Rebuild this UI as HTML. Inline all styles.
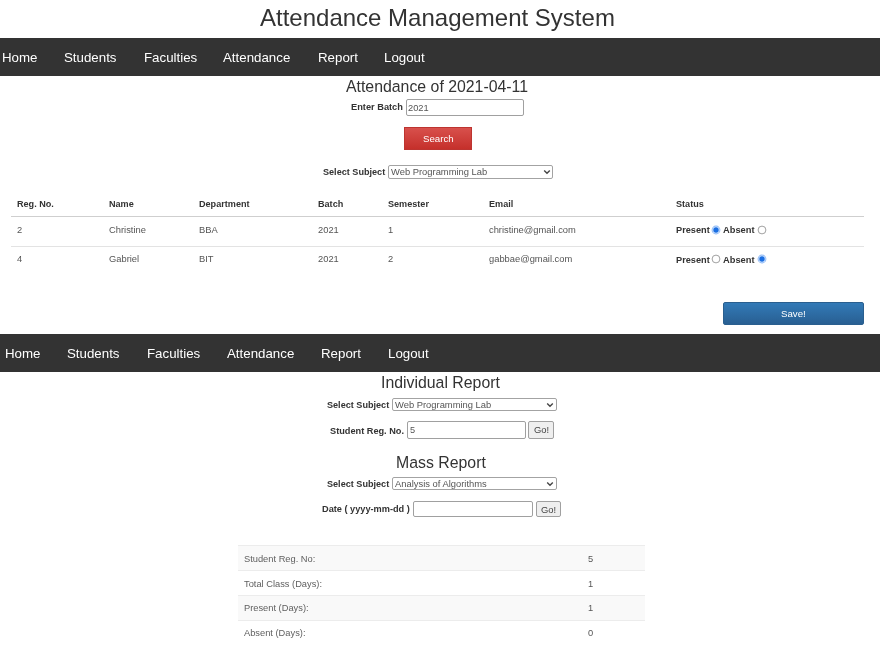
<!DOCTYPE html>
<html><head><meta charset="utf-8"><style>
html,body{margin:0;padding:0;background:#fff;width:880px;height:660px;overflow:hidden;position:relative;}
.t{position:absolute;white-space:nowrap;will-change:transform;font-family:"Liberation Sans",sans-serif;}
.b{position:absolute;}
</style></head><body>
<div class="t" style="left:260.20px;top:6.04px;font-size:24px;line-height:24px;font-weight:normal;color:#333;">Attendance Management System</div>
<div class="b" style="left:0px;top:38px;width:880.00px;height:38.00px;background:#333;"></div>
<div class="t" style="left:2.00px;top:50.63px;font-size:13.3px;line-height:13.3px;font-weight:normal;color:#fff;">Home</div>
<div class="t" style="left:63.60px;top:50.63px;font-size:13.3px;line-height:13.3px;font-weight:normal;color:#fff;">Students</div>
<div class="t" style="left:143.60px;top:50.63px;font-size:13.3px;line-height:13.3px;font-weight:normal;color:#fff;">Faculties</div>
<div class="t" style="left:223.10px;top:50.63px;font-size:13.3px;line-height:13.3px;font-weight:normal;color:#fff;">Attendance</div>
<div class="t" style="left:317.60px;top:50.63px;font-size:13.3px;line-height:13.3px;font-weight:normal;color:#fff;">Report</div>
<div class="t" style="left:384.00px;top:50.63px;font-size:13.3px;line-height:13.3px;font-weight:normal;color:#fff;">Logout</div>
<div class="t" style="left:346.40px;top:78.89px;font-size:15.85px;line-height:15.85px;font-weight:normal;color:#333;">Attendance of 2021-04-11</div>
<div class="t" style="left:351.30px;top:103.43px;font-size:9.25px;line-height:9.25px;font-weight:bold;color:#333;">Enter Batch</div>
<div class="b" style="left:405.9px;top:98.8px;width:118.60px;height:17.00px;border:1px solid #a0a0a0;border-radius:2px;background:#fff;box-sizing:border-box;"></div>
<div class="t" style="left:408.40px;top:103.89px;font-size:9.3px;line-height:9.3px;font-weight:normal;color:#555;">2021</div>
<div class="b" style="left:403.8px;top:127px;width:68.00px;height:23.00px;background:linear-gradient(#d8504c,#c5302b);border:1px solid #bd3430;box-sizing:border-box;"></div>
<div class="t" style="left:422.60px;top:133.75px;font-size:9.7px;line-height:9.7px;font-weight:normal;color:#fff;">Search</div>
<div class="t" style="left:323.30px;top:168.46px;font-size:9.1px;line-height:9.1px;font-weight:bold;color:#333;">Select Subject</div>
<div class="b" style="left:388.3px;top:165px;width:164.90px;height:13.60px;border:1px solid #a3a3a3;border-radius:2px;background:#fff;box-sizing:border-box;"></div>
<div class="t" style="left:391.20px;top:167.40px;font-size:9.4px;line-height:9.4px;font-weight:normal;color:#555;">Web Programming Lab</div>
<svg class="b" style="left:542.9000000000001px;top:169.0px" width="8" height="6" viewBox="0 0 8 6"><path d="M1.2 1.5 L4 4.2 L6.8 1.5" fill="none" stroke="#444" stroke-width="1.4"/></svg>
<div class="t" style="left:17.00px;top:199.66px;font-size:9.1px;line-height:9.1px;font-weight:bold;color:#333;">Reg. No.</div>
<div class="t" style="left:108.60px;top:199.66px;font-size:9.1px;line-height:9.1px;font-weight:bold;color:#333;">Name</div>
<div class="t" style="left:199.20px;top:199.66px;font-size:9.1px;line-height:9.1px;font-weight:bold;color:#333;">Department</div>
<div class="t" style="left:318.20px;top:199.66px;font-size:9.1px;line-height:9.1px;font-weight:bold;color:#333;">Batch</div>
<div class="t" style="left:388.10px;top:199.66px;font-size:9.1px;line-height:9.1px;font-weight:bold;color:#333;">Semester</div>
<div class="t" style="left:489.20px;top:199.66px;font-size:9.1px;line-height:9.1px;font-weight:bold;color:#333;">Email</div>
<div class="t" style="left:676.00px;top:199.66px;font-size:9.1px;line-height:9.1px;font-weight:bold;color:#333;">Status</div>
<div class="b" style="left:11px;top:216px;width:853.20px;height:1.00px;background:#cfcfcf;"></div>
<div class="b" style="left:11px;top:245.6px;width:853.20px;height:1.00px;background:#e3e3e3;"></div>
<div class="t" style="left:17.00px;top:225.75px;font-size:9.35px;line-height:9.35px;font-weight:normal;color:#555;">2</div>
<div class="t" style="left:108.60px;top:225.75px;font-size:9.35px;line-height:9.35px;font-weight:normal;color:#555;">Christine</div>
<div class="t" style="left:199.20px;top:225.75px;font-size:9.35px;line-height:9.35px;font-weight:normal;color:#555;">BBA</div>
<div class="t" style="left:318.20px;top:225.75px;font-size:9.35px;line-height:9.35px;font-weight:normal;color:#555;">2021</div>
<div class="t" style="left:388.10px;top:225.75px;font-size:9.35px;line-height:9.35px;font-weight:normal;color:#555;">1</div>
<div class="t" style="left:489.20px;top:225.75px;font-size:9.35px;line-height:9.35px;font-weight:normal;color:#555;">christine@gmail.com</div>
<div class="t" style="left:17.00px;top:255.15px;font-size:9.35px;line-height:9.35px;font-weight:normal;color:#555;">4</div>
<div class="t" style="left:108.60px;top:255.15px;font-size:9.35px;line-height:9.35px;font-weight:normal;color:#555;">Gabriel</div>
<div class="t" style="left:199.20px;top:255.15px;font-size:9.35px;line-height:9.35px;font-weight:normal;color:#555;">BIT</div>
<div class="t" style="left:318.20px;top:255.15px;font-size:9.35px;line-height:9.35px;font-weight:normal;color:#555;">2021</div>
<div class="t" style="left:388.10px;top:255.15px;font-size:9.35px;line-height:9.35px;font-weight:normal;color:#555;">2</div>
<div class="t" style="left:489.20px;top:255.15px;font-size:9.35px;line-height:9.35px;font-weight:normal;color:#555;">gabbae@gmail.com</div>
<div class="t" style="left:675.70px;top:226.37px;font-size:9.2px;line-height:9.2px;font-weight:bold;color:#333;">Present</div>
<svg class="b" style="left:711px;top:224.5px" width="10" height="10" viewBox="0 0 10 10"><circle cx="5" cy="5" r="4.4" fill="#8cb8f6"/><circle cx="5" cy="5" r="3.5" fill="#d9e8fd"/><circle cx="5" cy="5" r="2.7" fill="#1b6fe3"/></svg>
<div class="t" style="left:723.30px;top:226.29px;font-size:9.3px;line-height:9.3px;font-weight:bold;color:#333;">Absent</div>
<svg class="b" style="left:756.6px;top:224.6px" width="10" height="10" viewBox="0 0 10 10"><circle cx="5" cy="5" r="3.9" fill="#fff" stroke="#8a8a8a" stroke-width="0.8"/></svg>
<div class="t" style="left:675.70px;top:255.67px;font-size:9.2px;line-height:9.2px;font-weight:bold;color:#333;">Present</div>
<svg class="b" style="left:711px;top:254.10000000000002px" width="10" height="10" viewBox="0 0 10 10"><circle cx="5" cy="5" r="3.9" fill="#fff" stroke="#8a8a8a" stroke-width="0.8"/></svg>
<div class="t" style="left:723.30px;top:255.59px;font-size:9.3px;line-height:9.3px;font-weight:bold;color:#333;">Absent</div>
<svg class="b" style="left:756.6px;top:254.10000000000002px" width="10" height="10" viewBox="0 0 10 10"><circle cx="5" cy="5" r="4.4" fill="#8cb8f6"/><circle cx="5" cy="5" r="3.5" fill="#d9e8fd"/><circle cx="5" cy="5" r="2.7" fill="#1b6fe3"/></svg>
<div class="b" style="left:722.5px;top:302px;width:141.70px;height:22.60px;background:linear-gradient(#337ab7,#285f92);border:1px solid #2a5f8f;border-radius:2px;box-sizing:border-box;"></div>
<div class="t" style="left:781.20px;top:309.25px;font-size:9.7px;line-height:9.7px;font-weight:normal;color:#fff;">Save!</div>
<div class="b" style="left:0px;top:334px;width:880.00px;height:38.00px;background:#333;"></div>
<div class="t" style="left:4.80px;top:346.53px;font-size:13.3px;line-height:13.3px;font-weight:normal;color:#fff;">Home</div>
<div class="t" style="left:67.00px;top:346.53px;font-size:13.3px;line-height:13.3px;font-weight:normal;color:#fff;">Students</div>
<div class="t" style="left:147.00px;top:346.53px;font-size:13.3px;line-height:13.3px;font-weight:normal;color:#fff;">Faculties</div>
<div class="t" style="left:226.60px;top:346.53px;font-size:13.3px;line-height:13.3px;font-weight:normal;color:#fff;">Attendance</div>
<div class="t" style="left:321.00px;top:346.53px;font-size:13.3px;line-height:13.3px;font-weight:normal;color:#fff;">Report</div>
<div class="t" style="left:387.60px;top:346.53px;font-size:13.3px;line-height:13.3px;font-weight:normal;color:#fff;">Logout</div>
<div class="t" style="left:381.20px;top:374.99px;font-size:15.85px;line-height:15.85px;font-weight:normal;color:#333;">Individual Report</div>
<div class="t" style="left:326.80px;top:400.76px;font-size:9.1px;line-height:9.1px;font-weight:bold;color:#333;">Select Subject</div>
<div class="b" style="left:392.1px;top:397.8px;width:164.60px;height:13.00px;border:1px solid #a3a3a3;border-radius:2px;background:#fff;box-sizing:border-box;"></div>
<div class="t" style="left:394.90px;top:399.80px;font-size:9.4px;line-height:9.4px;font-weight:normal;color:#555;">Web Programming Lab</div>
<svg class="b" style="left:546.4000000000001px;top:401.5px" width="8" height="6" viewBox="0 0 8 6"><path d="M1.2 1.5 L4 4.2 L6.8 1.5" fill="none" stroke="#444" stroke-width="1.4"/></svg>
<div class="t" style="left:329.80px;top:426.67px;font-size:9.2px;line-height:9.2px;font-weight:bold;color:#333;">Student Reg. No.</div>
<div class="b" style="left:407px;top:421.3px;width:118.60px;height:17.40px;border:1px solid #a0a0a0;border-radius:2px;background:#fff;box-sizing:border-box;"></div>
<div class="t" style="left:409.60px;top:426.27px;font-size:9.2px;line-height:9.2px;font-weight:normal;color:#555;">5</div>
<div class="b" style="left:528px;top:421.2px;width:26.00px;height:17.50px;border:1px solid #a0a0a0;border-radius:2px;background:#efefef;box-sizing:border-box;"></div>
<div class="t" style="left:534.00px;top:425.40px;font-size:9.4px;line-height:9.4px;font-weight:normal;color:#444;">Go!</div>
<div class="t" style="left:395.90px;top:454.69px;font-size:15.85px;line-height:15.85px;font-weight:normal;color:#333;">Mass Report</div>
<div class="t" style="left:326.80px;top:479.56px;font-size:9.1px;line-height:9.1px;font-weight:bold;color:#333;">Select Subject</div>
<div class="b" style="left:392.1px;top:477.2px;width:164.60px;height:13.10px;border:1px solid #a3a3a3;border-radius:2px;background:#fff;box-sizing:border-box;"></div>
<div class="t" style="left:394.90px;top:478.60px;font-size:9.4px;line-height:9.4px;font-weight:normal;color:#555;">Analysis of Algorithms</div>
<svg class="b" style="left:546.4000000000001px;top:480.95px" width="8" height="6" viewBox="0 0 8 6"><path d="M1.2 1.5 L4 4.2 L6.8 1.5" fill="none" stroke="#444" stroke-width="1.4"/></svg>
<div class="t" style="left:322.40px;top:504.67px;font-size:9.2px;line-height:9.2px;font-weight:bold;color:#333;">Date ( yyyy-mm-dd )</div>
<div class="b" style="left:413.4px;top:500.6px;width:119.60px;height:16.80px;border:1px solid #a0a0a0;border-radius:2px;background:#fff;box-sizing:border-box;"></div>
<div class="b" style="left:535.6px;top:500.8px;width:25.40px;height:16.60px;border:1px solid #a0a0a0;border-radius:2px;background:#efefef;box-sizing:border-box;"></div>
<div class="t" style="left:540.80px;top:504.70px;font-size:9.4px;line-height:9.4px;font-weight:normal;color:#444;">Go!</div>
<div class="b" style="left:238.25px;top:545.8px;width:406.25px;height:24.90px;background:#f9f9f9;"></div>
<div class="b" style="left:238.25px;top:545.1999999999999px;width:406.25px;height:1.00px;background:#ececec;"></div>
<div class="t" style="left:243.60px;top:554.69px;font-size:9.3px;line-height:9.3px;font-weight:normal;color:#606060;">Student Reg. No:</div>
<div class="t" style="left:588.40px;top:554.69px;font-size:9.3px;line-height:9.3px;font-weight:normal;color:#555;">5</div>
<div class="b" style="left:238.25px;top:570.1px;width:406.25px;height:1.00px;background:#ececec;"></div>
<div class="t" style="left:243.60px;top:579.59px;font-size:9.3px;line-height:9.3px;font-weight:normal;color:#606060;">Total Class (Days):</div>
<div class="t" style="left:588.40px;top:579.59px;font-size:9.3px;line-height:9.3px;font-weight:normal;color:#555;">1</div>
<div class="b" style="left:238.25px;top:595.6px;width:406.25px;height:24.90px;background:#f9f9f9;"></div>
<div class="b" style="left:238.25px;top:595.0px;width:406.25px;height:1.00px;background:#ececec;"></div>
<div class="t" style="left:243.60px;top:604.49px;font-size:9.3px;line-height:9.3px;font-weight:normal;color:#606060;">Present (Days):</div>
<div class="t" style="left:588.40px;top:604.49px;font-size:9.3px;line-height:9.3px;font-weight:normal;color:#555;">1</div>
<div class="b" style="left:238.25px;top:619.9px;width:406.25px;height:1.00px;background:#ececec;"></div>
<div class="t" style="left:243.60px;top:629.39px;font-size:9.3px;line-height:9.3px;font-weight:normal;color:#606060;">Absent (Days):</div>
<div class="t" style="left:588.40px;top:629.39px;font-size:9.3px;line-height:9.3px;font-weight:normal;color:#555;">0</div>
</body></html>
